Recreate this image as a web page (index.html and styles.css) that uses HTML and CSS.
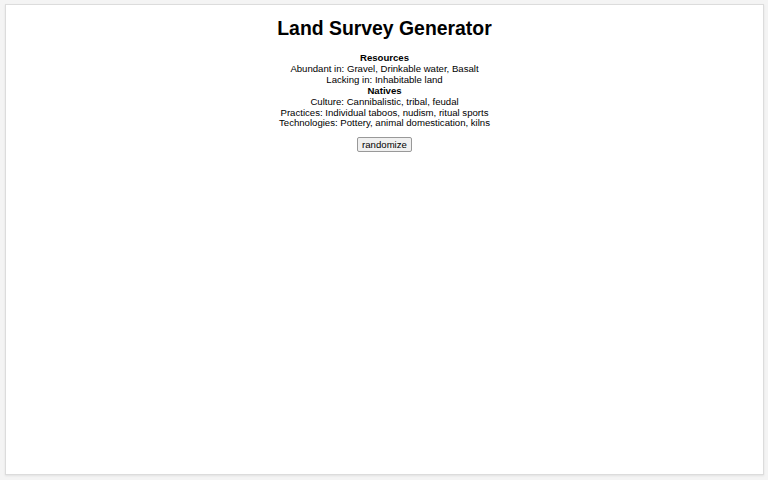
FILE: index.html
```html
<!DOCTYPE html>
<html>
<head>
<meta charset="utf-8">
<link rel="stylesheet" href="styles.css">
</head>
<body>
<div class="card">
  <h1 class="title">Land Survey Generator</h1>
  <div class="survey">
    <div class="head">Resources</div>
    <div>Abundant in: Gravel, Drinkable water, Basalt</div>
    <div>Lacking in: Inhabitable land</div>
    <div class="head">Natives</div>
    <div>Culture: Cannibalistic, tribal, feudal</div>
    <div>Practices: Individual taboos, nudism, ritual sports</div>
    <div>Technologies: Pottery, animal domestication, kilns</div>
  </div>
  <button class="btn">randomize</button>
</div>
</body>
</html>
```
FILE: styles.css
```css
html, body { margin: 0; padding: 0; }
body {
  background: #f4f4f4;
  font-family: "Liberation Sans", Arial, sans-serif;
  color: #000;
  height: 480px;
  padding: 4px 4px 4px 5px;
  box-sizing: border-box;
}
.card {
  background: #fff;
  border: 1px solid #dcdcdc;
  box-shadow: 0 1px 2px rgba(0,0,0,0.08);
  height: 471px;
  box-sizing: border-box;
  text-align: center;
  display: flex;
  flex-direction: column;
  align-items: center;
}
.title {
  font-size: 19.4px;
  font-weight: bold;
  margin: 12px 0 13px;
  line-height: 23px;
}
.survey {
  font-size: 9.6px;
  line-height: 10.9px;
}
.head { font-weight: bold; }
.btn {
  margin-top: 8px;
  font-family: "Liberation Sans", Arial, sans-serif;
  font-size: 9.6px;
  line-height: 11px;
  padding: 1px 4px;
  background: #f0f0f0;
  border: 1px solid #999;
  border-radius: 2px;
  color: #000;
}
```
